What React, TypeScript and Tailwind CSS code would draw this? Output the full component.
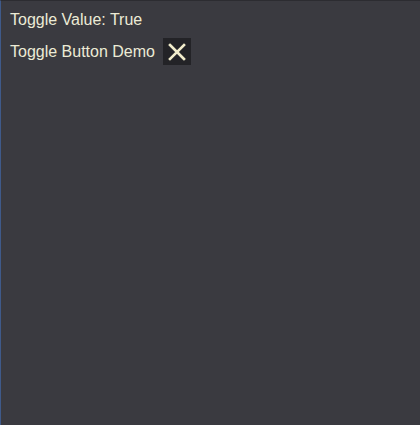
import { useState } from 'react'

const XIcon = () => (
  <svg width="18" height="18" viewBox="0 0 18 18" fill="none">
    <path d="M2 2L16 16M16 2L2 16" stroke="#f1eccb" strokeWidth="2.6" strokeLinecap="square" />
  </svg>
)

export default function App() {
  const [value, setValue] = useState(true)

  return (
    <div
      className="flex h-[425px] w-[420px] flex-col gap-[9px] border-l border-t border-l-[#3f5a8a] border-t-[#2c2c31] bg-[#3a3a40] px-[9px] pt-[10px] text-[16px] leading-[18px] text-[#ecebd6]"
      style={{ fontFamily: '"Liberation Sans", Arial, sans-serif' }}
    >
      <div>Toggle Value: {value ? 'True' : 'False'}</div>
      <div className="flex items-center gap-2">
        <span>Toggle Button Demo</span>
        <button
          type="button"
          onClick={() => setValue((v) => !v)}
          className="flex h-[27px] w-[28px] items-center justify-center bg-[#232327]"
        >
          {value && <XIcon />}
        </button>
      </div>
    </div>
  )
}
